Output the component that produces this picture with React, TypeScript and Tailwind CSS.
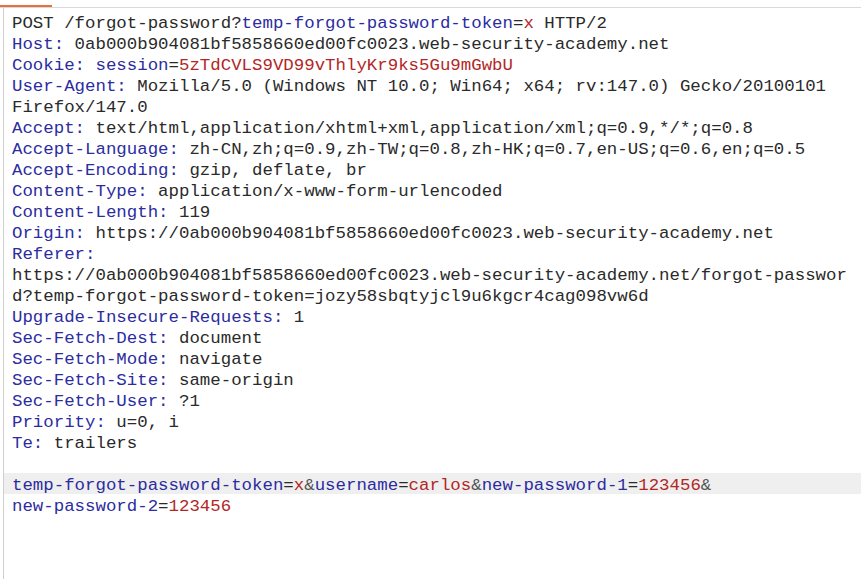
import React from "react";

type Seg = [string, "k" | "v" | "r" | "p"];

const color: Record<string, string> = {
  k: "text-[#2c2ca0]",
  v: "text-[#2a2a2a]",
  r: "text-[#b32626]",
  p: "text-[#555555]",
};

const lines: Seg[][] = [
  [["POST /forgot-password?", "v"], ["temp-forgot-password-token", "k"], ["=", "v"], ["x", "r"], [" HTTP/2", "v"]],
  [["Host:", "k"], [" 0ab000b904081bf5858660ed00fc0023.web-security-academy.net", "v"]],
  [["Cookie:", "k"], [" session", "k"], ["=", "v"], ["5zTdCVLS9VD99vThlyKr9ks5Gu9mGwbU", "r"]],
  [["User-Agent:", "k"], [" Mozilla/5.0 (Windows NT 10.0; Win64; x64; rv:147.0) Gecko/20100101", "v"]],
  [["Firefox/147.0", "v"]],
  [["Accept:", "k"], [" text/html,application/xhtml+xml,application/xml;q=0.9,*/*;q=0.8", "v"]],
  [["Accept-Language:", "k"], [" zh-CN,zh;q=0.9,zh-TW;q=0.8,zh-HK;q=0.7,en-US;q=0.6,en;q=0.5", "v"]],
  [["Accept-Encoding:", "k"], [" gzip, deflate, br", "v"]],
  [["Content-Type:", "k"], [" application/x-www-form-urlencoded", "v"]],
  [["Content-Length:", "k"], [" 119", "v"]],
  [["Origin:", "k"], [" https://0ab000b904081bf5858660ed00fc0023.web-security-academy.net", "v"]],
  [["Referer:", "k"]],
  [["https://0ab000b904081bf5858660ed00fc0023.web-security-academy.net/forgot-passwor", "v"]],
  [["d?temp-forgot-password-token=jozy58sbqtyjcl9u6kgcr4cag098vw6d", "v"]],
  [["Upgrade-Insecure-Requests:", "k"], [" 1", "v"]],
  [["Sec-Fetch-Dest:", "k"], [" document", "v"]],
  [["Sec-Fetch-Mode:", "k"], [" navigate", "v"]],
  [["Sec-Fetch-Site:", "k"], [" same-origin", "v"]],
  [["Sec-Fetch-User:", "k"], [" ?1", "v"]],
  [["Priority:", "k"], [" u=0, i", "v"]],
  [["Te:", "k"], [" trailers", "v"]],
  [],
  [
    ["temp-forgot-password-token", "k"], ["=", "v"], ["x", "r"], ["&", "p"],
    ["username", "k"], ["=", "v"], ["carlos", "r"], ["&", "p"],
    ["new-password-1", "k"], ["=", "v"], ["123456", "r"], ["&", "p"],
  ],
  [["new-password-2", "k"], ["=", "v"], ["123456", "r"]],
];

export default function App() {
  return (
    <div className="w-[861px] h-[579px] bg-white overflow-hidden flex flex-col">
      {/* tab strip */}
      <div className="h-[5px] shrink-0" />
      <div className="h-[2px] w-[52px] bg-[#e8703a] shrink-0" />
      <div className="h-px bg-[#d9d9d9] shrink-0" />

      {/* editor */}
      <div className="flex-1 ml-[3px] border-l border-[#cfcfcf] pt-[3px] font-['Liberation_Mono','Courier_New',monospace] text-[17.4px]">
        {lines.map((segs, i) => (
          <div
            key={i}
            className={`h-[21px] leading-[25px] pl-[8px] whitespace-pre overflow-visible ${i === 22 ? "bg-[#efefef]" : ""}`}
          >
            {segs.map(([t, c], j) => (
              <span key={j} className={color[c]}>
                {t}
              </span>
            ))}
          </div>
        ))}
      </div>
    </div>
  );
}
